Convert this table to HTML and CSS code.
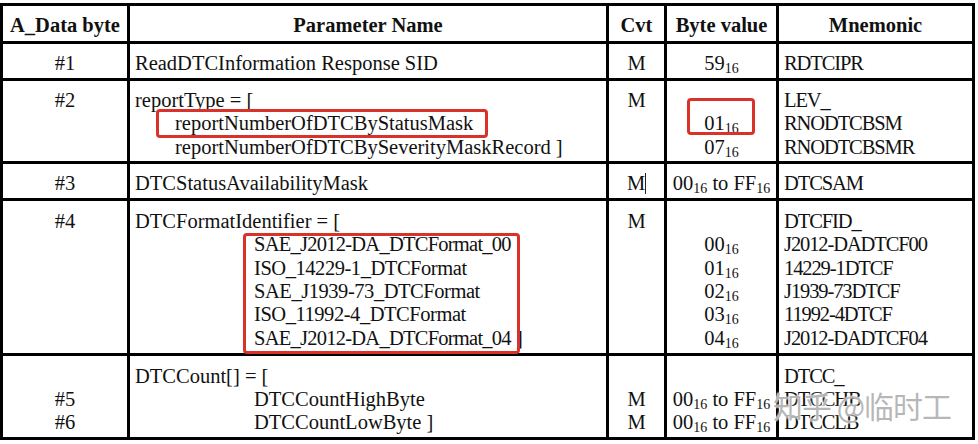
FILE: index.html
```html
<!DOCTYPE html>
<html>
<head>
<meta charset="utf-8">
<link rel="stylesheet" href="styles.css">
</head>
<body>
<div class="sheet">
  <div class="tbl">
    <div class="cell head"><div>A_Data byte</div></div>
    <div class="cell head"><div>Parameter Name</div></div>
    <div class="cell head"><div>Cvt</div></div>
    <div class="cell head"><div>Byte value</div></div>
    <div class="cell head"><div>Mnemonic</div></div>

    <div class="cell mid"><div>#1</div></div>
    <div class="cell"><div>ReadDTCInformation Response SID</div></div>
    <div class="cell mid"><div>M</div></div>
    <div class="cell mid"><div>59<sub>16</sub></div></div>
    <div class="cell mn"><div>RDTCIPR</div></div>

    <div class="cell mid"><div>#2</div><div>&nbsp;</div><div>&nbsp;</div></div>
    <div class="cell"><div>reportType = [</div><div class="in1">reportNumberOfDTCByStatusMask</div><div class="in1">reportNumberOfDTCBySeverityMaskRecord ]</div></div>
    <div class="cell mid"><div>M</div><div>&nbsp;</div><div>&nbsp;</div></div>
    <div class="cell mid"><div>&nbsp;</div><div>01<sub>16</sub></div><div>07<sub>16</sub></div></div>
    <div class="cell mn"><div>LEV_</div><div>RNODTCBSM</div><div>RNODTCBSMR</div></div>

    <div class="cell mid"><div>#3</div></div>
    <div class="cell"><div>DTCStatusAvailabilityMask</div></div>
    <div class="cell mid"><div>M<span class="caret"></span></div></div>
    <div class="cell mid"><div>00<sub>16</sub> to FF<sub>16</sub></div></div>
    <div class="cell mn"><div>DTCSAM</div></div>

    <div class="cell mid"><div>#4</div><div>&nbsp;</div><div>&nbsp;</div><div>&nbsp;</div><div>&nbsp;</div><div>&nbsp;</div></div>
    <div class="cell">
      <div>DTCFormatIdentifier = [</div>
      <div class="in2 fmt-long">SAE_J2012-DA_DTCFormat_00</div>
      <div class="in2 fmt">ISO_14229-1_DTCFormat</div>
      <div class="in2 fmt">SAE_J1939-73_DTCFormat</div>
      <div class="in2 fmt">ISO_11992-4_DTCFormat</div>
      <div class="in2"><span class="fmt-long">SAE_J2012-DA_DTCFormat_04</span> ]</div>
    </div>
    <div class="cell mid"><div>M</div><div>&nbsp;</div><div>&nbsp;</div><div>&nbsp;</div><div>&nbsp;</div><div>&nbsp;</div></div>
    <div class="cell mid"><div>&nbsp;</div><div>00<sub>16</sub></div><div>01<sub>16</sub></div><div>02<sub>16</sub></div><div>03<sub>16</sub></div><div>04<sub>16</sub></div></div>
    <div class="cell mn"><div>DTCFID_</div><div>J2012-DADTCF00</div><div>14229-1DTCF</div><div>J1939-73DTCF</div><div>11992-4DTCF</div><div>J2012-DADTCF04</div></div>

    <div class="cell mid"><div>&nbsp;</div><div>#5</div><div>#6</div></div>
    <div class="cell"><div>DTCCount[] = [</div><div class="in2">DTCCountHighByte</div><div class="in2">DTCCountLowByte ]</div></div>
    <div class="cell mid"><div>&nbsp;</div><div>M</div><div>M</div></div>
    <div class="cell mid"><div>&nbsp;</div><div>00<sub>16</sub> to FF<sub>16</sub></div><div>00<sub>16</sub> to FF<sub>16</sub></div></div>
    <div class="cell mn"><div>DTCC_</div><div>DTCCHB</div><div>DTCCLB</div></div>
  </div>

  <div class="mark mark-status"></div>
  <div class="mark mark-value"></div>
  <div class="mark mark-formats"></div>
  <div class="watermark">知乎 @临时工</div>
</div>
</body>
</html>
```
FILE: styles.css
```css
html, body {
  margin: 0;
  padding: 0;
  background: #fff;
}
.sheet {
  position: relative;
  width: 978px;
  height: 444px;
  padding-top: 3px;
  box-sizing: border-box;
  font-family: "Liberation Serif", "Times New Roman", serif;
  font-size: 20.5px;
  color: #111;
}
.tbl {
  display: grid;
  grid-template-columns: 124px 476px 55px 109px 193px;
  grid-template-rows: 35px 34px 80px 34px 152px 81px;
  gap: 3px;
  padding: 3px;
  background: #000;
  width: max-content;
}
.cell {
  background: #fff;
  display: flex;
  flex-direction: column;
  justify-content: center;
  padding: 6px 5px 0;
  line-height: 23.3px;
  white-space: nowrap;
  box-sizing: border-box;
}
.cell > div {
  height: 23.3px;
}
.head {
  font-weight: bold;
  align-items: center;
  padding-top: 4px;
}
.mid {
  text-align: center;
}
.mn {
  letter-spacing: -1.1px;
}
.in1 { padding-left: 40px; }
.in2 { padding-left: 119px; }
.fmt { letter-spacing: -0.45px; }
.fmt-long { letter-spacing: -0.75px; }
sub {
  font-size: 0.68em;
  vertical-align: -0.2em;
  line-height: 0;
  letter-spacing: 0;
}
.caret {
  display: inline-block;
  width: 1px;
  height: 21px;
  background: #222;
  vertical-align: -4px;
  margin-left: 0;
}
.mark {
  position: absolute;
  border: 3px solid #d8322b;
  border-radius: 4px;
  box-sizing: border-box;
}
.mark-status { left: 156px; top: 109px; width: 332px; height: 29px; }
.mark-value { left: 687px; top: 98px; width: 68px; height: 37px; }
.mark-formats { left: 243px; top: 233px; width: 277px; height: 121px; }
.watermark {
  position: absolute;
  left: 773px;
  top: 383px;
  font-family: "Noto Sans CJK SC", sans-serif;
  font-size: 30px;
  color: rgba(160, 160, 160, 0.75);
  text-shadow: 0 0 2px #fff, 0 0 2px #fff;
  white-space: nowrap;
  letter-spacing: -1px;
}
```
